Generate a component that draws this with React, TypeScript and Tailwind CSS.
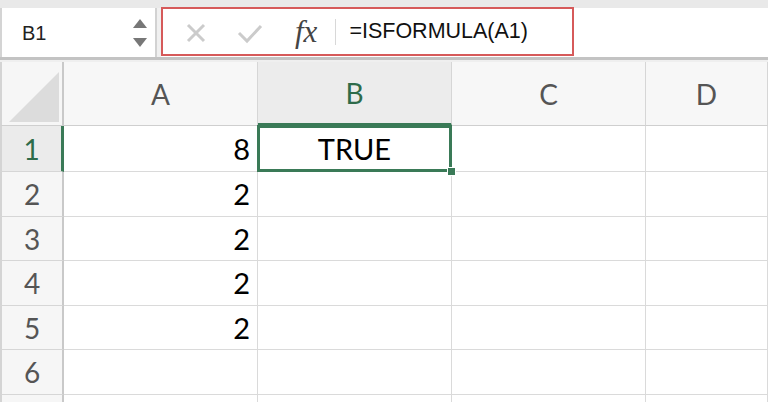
import React from "react";

const cellFont = { fontFamily: "Lato, 'Open Sans', sans-serif" };

function Corner() {
  return (
    <div className="h-full border-r-2 border-b border-r-[#c9c9c9] border-b-[#cfcfcf] bg-[#f6f6f6] border-l-2 border-l-[#d4d4d4] flex items-end justify-end pr-[3px] pb-[3px]">
      <svg width="50" height="50" viewBox="0 0 50 50">
        <polygon points="0,50 50,0 50,50" fill="#dcdcdc" />
      </svg>
    </div>
  );
}

function ColHead({ label, selected }: { label: string; selected?: boolean }) {
  return (
    <div
      className={
        "h-full flex items-center justify-center border-r border-[#d6d6d6] text-[28px] " +
        (selected
          ? "bg-[#ececec] text-[#2e6b4a] border-b-[3px] border-b-[#3a7a57]"
          : "bg-[#f7f7f7] text-[#555] border-b border-b-[#cfcfcf]")
      }
      style={cellFont}
    >
      {label}
    </div>
  );
}

function RowHead({ n, selected }: { n?: number; selected?: boolean }) {
  return (
    <div
      className={
        "h-full flex items-center justify-center border-b border-[#d6d6d6] border-l-2 border-l-[#d4d4d4] text-[28px] " +
        (selected
          ? "bg-[#ebebeb] text-[#2e6b4a] border-r-[3px] border-r-[#3a7a57]"
          : "bg-[#f6f6f6] text-[#555] border-r-2 border-r-[#c9c9c9]")
      }
      style={cellFont}
    >
      {n}
    </div>
  );
}

function Cell({ v, align = "right" }: { v?: string; align?: "right" | "center" }) {
  return (
    <div
      className={
        "h-full flex items-center border-r border-b border-[#dadada] bg-white text-[29px] text-black " +
        (align === "right" ? "justify-end pr-[7px]" : "justify-center")
      }
      style={cellFont}
    >
      {v}
    </div>
  );
}

export default function App() {
  const rows: { a?: string }[] = [
    { a: "8" },
    { a: "2" },
    { a: "2" },
    { a: "2" },
    { a: "2" },
    {},
  ];
  return (
    <div className="w-[768px] h-[402px] overflow-hidden bg-white flex flex-col">
      <div className="h-[8px] bg-[#e9e9e9] shrink-0" />
      <div className="h-[49px] shrink-0 flex bg-white">
        <div className="w-[157px] flex items-center justify-between pl-[20px] pr-[8px] border-r-2 border-[#d2d2d2] border-l-2 border-l-[#d4d4d4]">
          <span className="text-[20px] text-[#222]" style={{ fontFamily: "'Liberation Sans', Arial, sans-serif" }}>
            B1
          </span>
          <div className="flex flex-col gap-[10px]">
            <svg width="14" height="9" viewBox="0 0 14 9">
              <polygon points="7,0 14,9 0,9" fill="#777" />
            </svg>
            <svg width="14" height="9" viewBox="0 0 14 9">
              <polygon points="0,0 14,0 7,9" fill="#777" />
            </svg>
          </div>
        </div>
        <div className="w-[4px] bg-[#f0f0f0]" />
        <div className="w-[413px] border-2 border-[#d65a5a] flex items-center pl-[22px] -mt-[1px] h-[49px]">
          <svg width="22" height="22" viewBox="0 0 22 22" className="mt-[2px]">
            <path d="M3 3 L19 19 M19 3 L3 19" stroke="#cbcbcb" strokeWidth="3" />
          </svg>
          <svg width="26" height="22" viewBox="0 0 26 22" className="ml-[30px] mt-[2px]">
            <path d="M2 11 L10 19 L24 4" stroke="#cbcbcb" strokeWidth="3" fill="none" />
          </svg>
          <span
            className="ml-[32px] text-[31px] italic text-[#444] leading-none"
            style={{ fontFamily: "'Liberation Serif', 'Times New Roman', serif" }}
          >
            fx
          </span>
          <div className="ml-[18px] w-[1px] h-[26px] bg-[#d8d8d8]" />
          <span
            className="ml-[13px] text-[21.5px] text-[#111]"
            style={{ fontFamily: "'Liberation Sans', Arial, sans-serif" }}
          >
            =ISFORMULA(A1)
          </span>
        </div>
        <div className="flex-1 bg-white" />
      </div>
      <div className="h-[3px] bg-[#c3c3c3] shrink-0" />
      <div className="h-[2px] bg-[#efefef] shrink-0" />
      <div className="grid grid-cols-[64px_194px_194px_194px_1fr] grid-rows-[64px_46px_45px_44px_45px_44px_45px_45px] flex-1">
        <Corner />
        <ColHead label="A" />
        <ColHead label="B" selected />
        <ColHead label="C" />
        <ColHead label="D" />
        {rows.map((r, i) => (
          <React.Fragment key={i}>
            <RowHead n={i + 1} selected={i === 0} />
            <Cell v={r.a} />
            {i === 0 ? (
              <div className="relative h-full bg-white">
                <div
                  className="absolute -left-[1px] -top-[1px] right-0 bottom-0 border-[3px] border-[#3a7a57] flex items-center justify-center text-[29px] text-black"
                  style={cellFont}
                >
                  TRUE
                </div>
                <div className="absolute -right-[4px] -bottom-[4px] w-[9px] h-[9px] bg-[#3a7a57] border border-white z-10" />
              </div>
            ) : (
              <Cell />
            )}
            <Cell />
            <Cell />
          </React.Fragment>
        ))}
        <RowHead />
        <Cell />
        <Cell />
        <Cell />
        <Cell />
      </div>
    </div>
  );
}
